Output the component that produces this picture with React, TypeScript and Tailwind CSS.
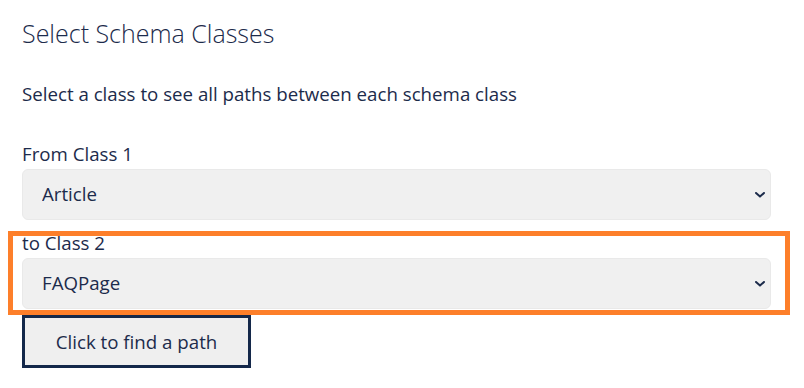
const textColor = "text-[#1c2b4b]";

function Chevron() {
  return (
    <svg
      className="pointer-events-none absolute right-[6px] top-1/2 -translate-y-1/2"
      width="10"
      height="6"
      viewBox="0 0 10 6"
      fill="none"
    >
      <path d="M1 1l4 3.6L9 1" stroke="#1c2b4b" strokeWidth="2" strokeLinecap="round" strokeLinejoin="round" />
    </svg>
  );
}

function SchemaSelect({ value, options }: { value: string; options: string[] }) {
  return (
    <div className="relative">
      <select
        defaultValue={value}
        className={`block h-[51px] w-full appearance-none rounded-[6px] border border-[#e9e9e9] bg-[#f0f0f0] pl-[19px] text-[18.7px] outline-none ${textColor}`}
      >
        {options.map((o) => (
          <option key={o}>{o}</option>
        ))}
      </select>
      <Chevron />
    </div>
  );
}

export default function App() {
  const classes = ["Article", "FAQPage", "Person", "Organization"];
  return (
    <div
      className={`min-h-screen w-[804px] bg-white pl-[22px] pr-[33px] pt-[19px] ${textColor}`}
      style={{ fontFamily: '"Open Sans", "Noto Sans", sans-serif' }}
    >
      <h1 className="text-[25px] font-light leading-[29px]">Select Schema Classes</h1>
      <p className="mt-[32px] text-[18.7px] leading-[27px]">
        Select a class to see all paths between each schema class
      </p>

      <label className="mt-[33px] block text-[18.7px] leading-[27px]">From Class 1</label>
      <div className="mt-[2px]">
        <SchemaSelect value="Article" options={classes} />
      </div>

      <div className="relative mt-[9px]">
        <div className="pointer-events-none absolute -left-[14px] -right-[19px] top-[2px] bottom-[-6px] border-[5px] border-[#fd7f2a]" />
        <label className="block text-[18.7px] leading-[27px]">to Class 2</label>
        <div className="mt-[2px]">
          <SchemaSelect value="FAQPage" options={classes} />
        </div>
      </div>

      <button className="mt-[6px] h-[53px] w-[229px] border-[3px] border-[#14284a] bg-[#efefef] text-[18.7px] leading-[27px]">
        Click to find a path
      </button>
    </div>
  );
}
